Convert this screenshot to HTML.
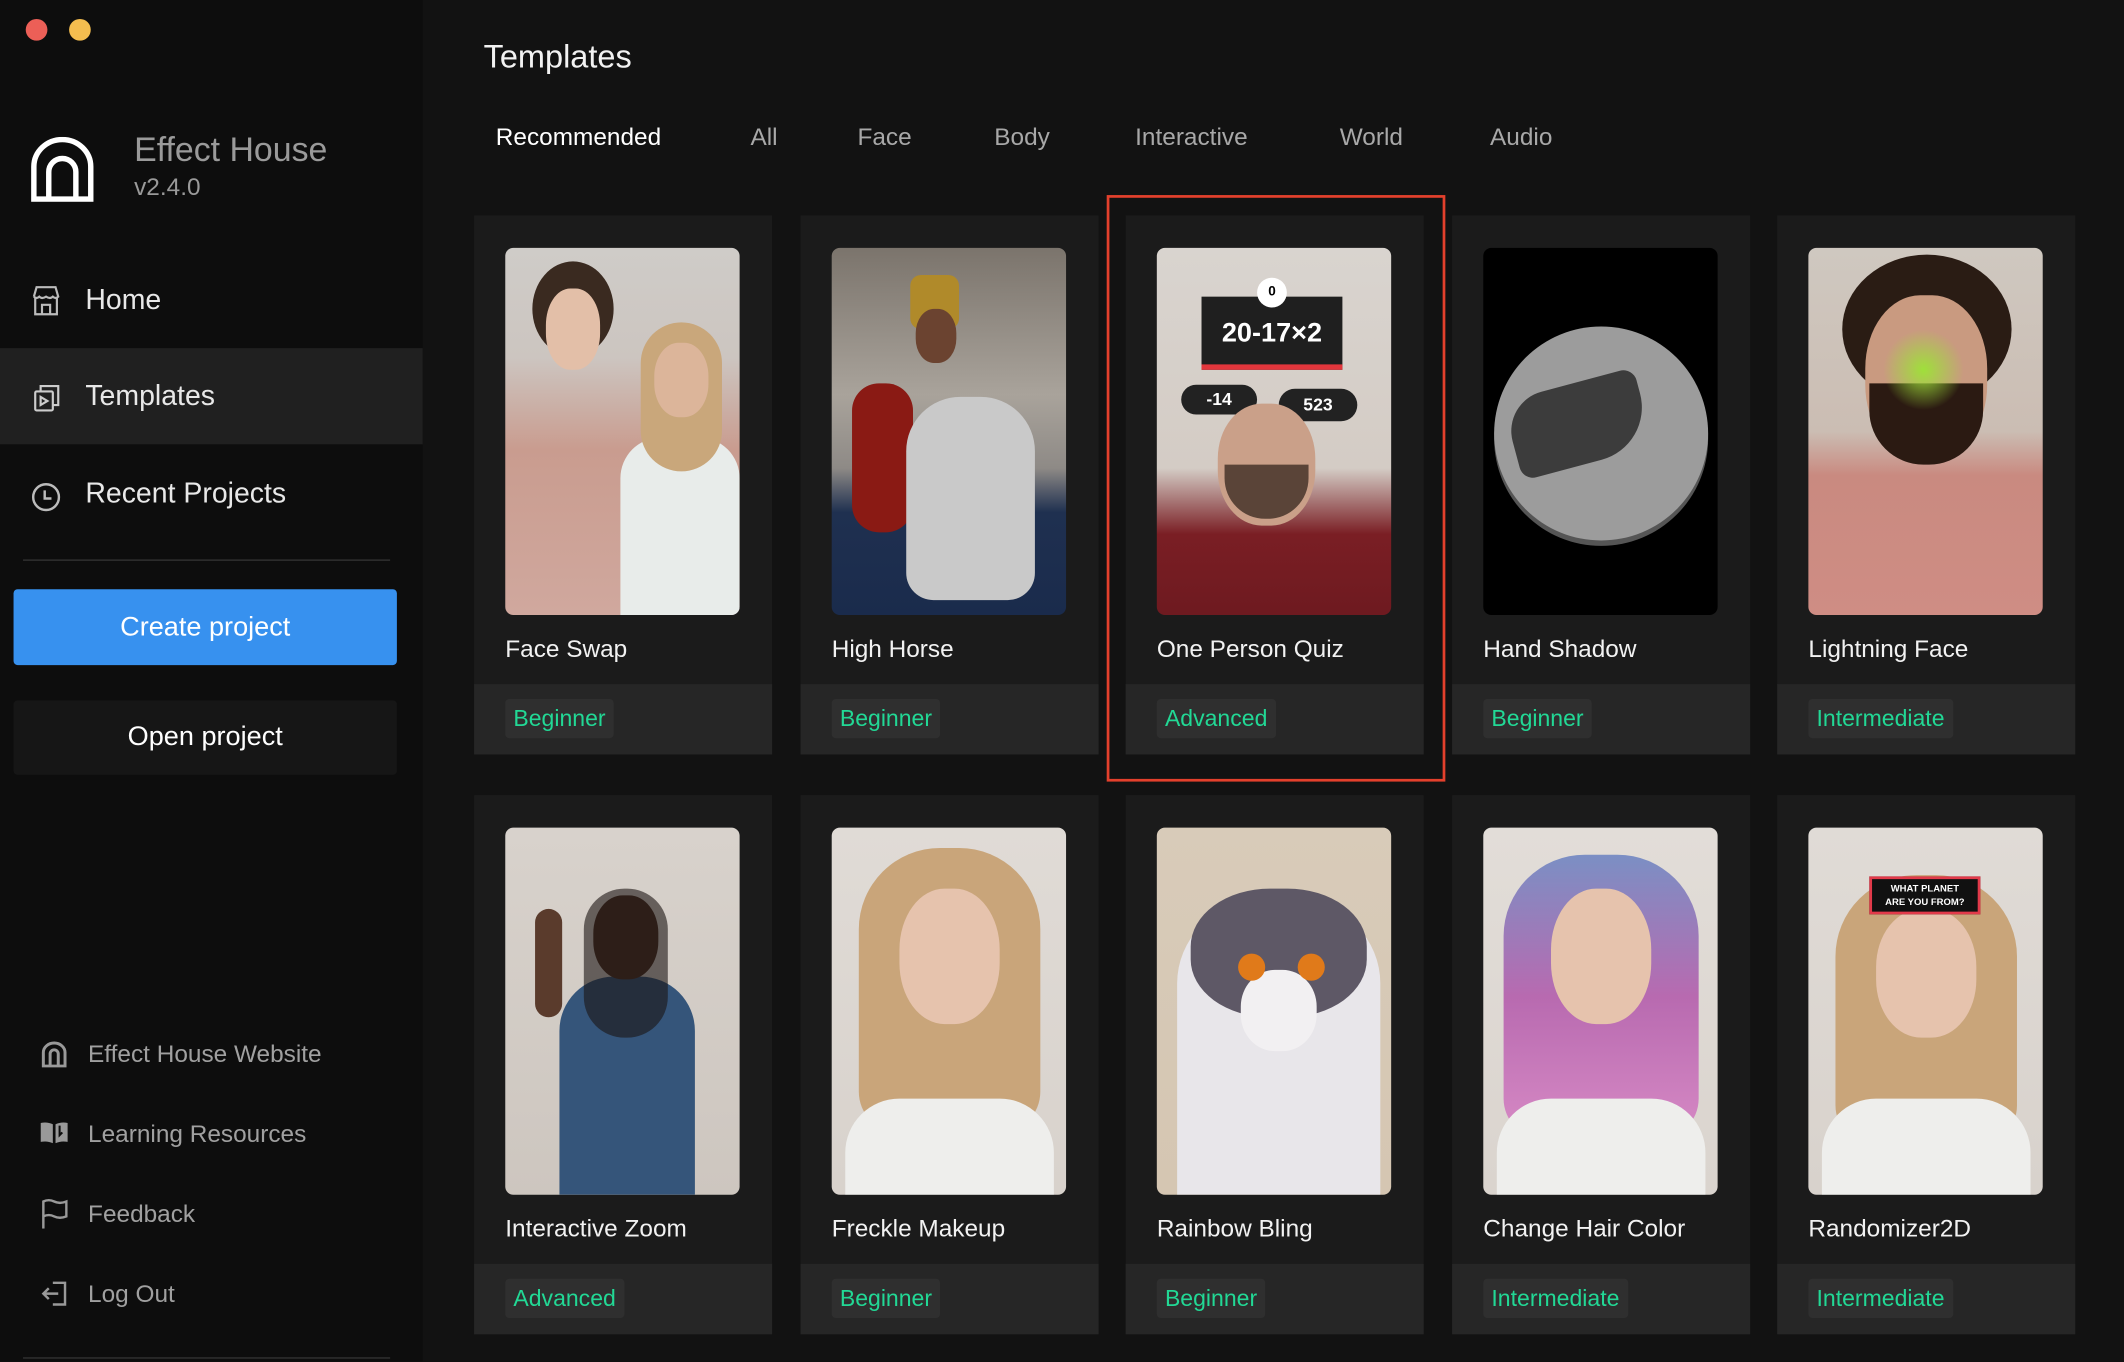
<!DOCTYPE html>
<html><head><meta charset="utf-8">
<style>
*{margin:0;padding:0;box-sizing:border-box}
html,body{width:2124px;height:1362px;overflow:hidden;background:#111;font-family:"Liberation Sans",sans-serif}
#w{position:absolute;left:0;top:0;width:1568px;height:1005px;transform:scale(1.35459);transform-origin:0 0;background:#121212}
.a{position:absolute}
#side{left:0;top:0;width:312px;height:1005px;background:#0d0d0d}
.dot{width:16px;height:16px;border-radius:50%;top:14px}
.nav{left:63px;font-size:21px;color:#e8e8e8}
.bl{left:65px;font-size:18px;color:#a0a0a0}
.tab{top:91px;font-size:18px;color:#a8a8a8}
.card{width:220px;height:398px;background:#1b1b1b}
.card .bot{position:absolute;left:0;bottom:0;width:220px;height:52px;background:#262626}
.card .img{position:absolute;left:23px;top:24px;width:173px;height:271px;border-radius:6px;overflow:hidden}
.card .t{position:absolute;left:23px;top:310px;font-size:18px;color:#f2f2f2}
.card .b{position:absolute;left:23px;top:357px;height:29px;padding:0 6px;line-height:30px;background:#2f2f2f;border-radius:3px;font-size:17px;color:#22d895}
</style></head><body><div id="w">
<div id="side" class="a"></div>
<div class="a dot" style="left:19px;background:#ec5f57"></div>
<div class="a dot" style="left:51px;background:#f4bd4f"></div>
<svg class="a" style="left:22px;top:101px" width="48" height="48" viewBox="0 0 48 48" fill="none" stroke="#fff" stroke-width="4"><path d="M3 46V22A21 20 0 0 1 45 22V46Z"/><path d="M14 46V26A10 10 0 0 1 34 26V46"/></svg>
<div class="a" style="left:99px;top:97px;font-size:25px;color:#9a9a9a">Effect House</div>
<div class="a" style="left:99px;top:128px;font-size:18px;color:#9a9a9a">v2.4.0</div>
<svg class="a" style="left:24px;top:211px" width="20" height="22" viewBox="0 0 20 22" fill="none" stroke="#bbb" stroke-width="1.6"><path d="M2 8V21H18V8M1 8L3 1H17L19 8Q17 10 15 8Q13 10 10 8Q7 10 5 8Q3 10 1 8M7 21V14H13V21"/></svg>
<div class="a nav" style="top:210px">Home</div>
<div class="a" style="left:0;top:257px;width:312px;height:71px;background:#202020"></div>
<svg class="a" style="left:24px;top:283px" width="22" height="22" viewBox="0 0 22 22" fill="none" stroke="#ccc" stroke-width="1.6"><rect x="2" y="6" width="13" height="14" rx="1"/><path d="M6 6V2H19V16H15"/><path d="M6 10L11 13L6 16Z"/></svg>
<div class="a nav" style="top:281px">Templates</div>
<svg class="a" style="left:23px;top:356px" width="22" height="22" viewBox="0 0 22 22" fill="none" stroke="#bbb" stroke-width="1.8"><circle cx="11" cy="11" r="9.5"/><path d="M10 6V12H15"/></svg>
<div class="a nav" style="top:353px">Recent Projects</div>
<div class="a" style="left:17px;top:413px;width:271px;height:1px;background:#333"></div>
<div class="a" style="left:10px;top:435px;width:283px;height:56px;background:#3791ef;border-radius:3px;color:#fff;font-size:20px;text-align:center;line-height:56px">Create project</div>
<div class="a" style="left:10px;top:517px;width:283px;height:55px;background:#161616;border-radius:3px;color:#fff;font-size:20px;text-align:center;line-height:55px">Open project</div>
<svg class="a" style="left:30px;top:768px" width="20" height="20" viewBox="0 0 20 20" fill="none" stroke="#999" stroke-width="2.2"><path d="M2 19V9A8 7 0 0 1 18 9V19Z"/><path d="M7 19V10A3 3 0 0 1 13 10V19"/></svg>
<div class="a bl" style="top:768px">Effect House Website</div>
<svg class="a" style="left:30px;top:828px" width="20" height="16" viewBox="0 0 20 16"><path d="M0 1Q5 0 9 2V16Q5 14 0 15Z" fill="#999"/><path d="M11 2Q15 0 20 1V15Q15 14 11 16Z" fill="#999"/><path d="M14 3V10L16 8" stroke="#0d0d0d" stroke-width="1.5" fill="none"/></svg>
<div class="a bl" style="top:827px">Learning Resources</div>
<svg class="a" style="left:30px;top:885px" width="20" height="22" viewBox="0 0 20 22" fill="none" stroke="#999" stroke-width="1.8"><path d="M2 22V2Q6 0 10 2Q14 4 19 2V13Q14 15 10 13Q6 11 2 13"/></svg>
<div class="a bl" style="top:886px">Feedback</div>
<svg class="a" style="left:30px;top:945px" width="20" height="20" viewBox="0 0 20 20" fill="none" stroke="#999" stroke-width="1.8"><path d="M9 2H18V18H9M13 10H2M6 6L2 10L6 14"/></svg>
<div class="a bl" style="top:945px">Log Out</div>
<div class="a" style="left:17px;top:1002px;width:271px;height:1px;background:#333"></div>

<div class="a" style="left:357px;top:29px;font-size:24px;color:#f2f2f2">Templates</div>
<div class="a tab" style="left:366px;color:#fff">Recommended</div>
<div class="a tab" style="left:554px">All</div>
<div class="a tab" style="left:633px">Face</div>
<div class="a tab" style="left:734px">Body</div>
<div class="a tab" style="left:838px">Interactive</div>
<div class="a tab" style="left:989px">World</div>
<div class="a tab" style="left:1100px">Audio</div>

<div class="a card" style="left:350px;top:159px"><div class="bot"></div><div class="img" style="background:linear-gradient(180deg,#cfccc8 0%,#ccc5c0 30%,#c99c8f 55%,#d0a89e 100%)"><div class="a" style="left:85px;top:140px;width:88px;height:131px;background:#e8ecea;border-radius:30px 30px 0 0"></div><div class="a" style="left:20px;top:10px;width:60px;height:70px;border-radius:50%;background:#3a2a20"></div><div class="a" style="left:30px;top:30px;width:40px;height:60px;border-radius:45%;background:#e3bfa8"></div><div class="a" style="left:100px;top:55px;width:60px;height:110px;border-radius:30px;background:#c9a77b"></div><div class="a" style="left:110px;top:70px;width:40px;height:55px;border-radius:45%;background:#dcb59a"></div></div><div class="t">Face Swap</div><div class="b">Beginner</div></div>
<div class="a card" style="left:591px;top:159px"><div class="bot"></div><div class="img" style="background:linear-gradient(180deg,#7b746c 0%,#a9a39b 40%,#8e8a86 60%,#1f3050 72%,#1a2b4c 100%)"><div class="a" style="left:15px;top:100px;width:45px;height:110px;background:#8a1a14;border-radius:20px"></div><div class="a" style="left:55px;top:110px;width:95px;height:150px;background:#c9c9c9;border-radius:40px 40px 20px 20px"></div><div class="a" style="left:58px;top:20px;width:36px;height:40px;background:#b08a2a;border-radius:8px"></div><div class="a" style="left:62px;top:45px;width:30px;height:40px;background:#6b4330;border-radius:45%"></div></div><div class="t">High Horse</div><div class="b">Beginner</div></div>
<div class="a card" style="left:831px;top:159px"><div class="bot"></div><div class="img" style="background:linear-gradient(180deg,#d9d4cf 0%,#d4ccc5 60%,#7a1e24 78%,#6e1a20 100%)"><div class="a" style="left:33px;top:36px;width:104px;height:54px;background:#1f1f1f;color:#fff;font-size:20px;font-weight:bold;text-align:center;line-height:54px;border-bottom:4px solid #e2363c">20-17×2</div><div class="a" style="left:74px;top:22px;width:22px;height:22px;border-radius:50%;background:#fff;color:#000;font-size:10px;font-weight:bold;text-align:center;line-height:22px">0</div><div class="a" style="left:18px;top:101px;width:56px;height:22px;border-radius:11px;background:#222;color:#fff;font-size:13px;font-weight:bold;text-align:center;line-height:22px">-14</div><div class="a" style="left:90px;top:104px;width:58px;height:24px;border-radius:12px;background:#222;color:#fff;font-size:13px;font-weight:bold;text-align:center;line-height:24px">523</div><div class="a" style="left:45px;top:115px;width:72px;height:90px;border-radius:45%;background:#caa089"></div><div class="a" style="left:50px;top:160px;width:62px;height:40px;border-radius:0 0 30px 30px;background:#5a4438"></div></div><div class="t">One Person Quiz</div><div class="b">Advanced</div></div>
<div class="a card" style="left:1072px;top:159px"><div class="bot"></div><div class="img" style="background:#000"><div class="a" style="left:8px;top:58px;width:158px;height:158px;border-radius:50%;background:#9c9c9c;box-shadow:0 4px 0 #555"></div><div class="a" style="left:20px;top:100px;width:100px;height:60px;background:#3c3c3c;border-radius:30px 10px 40px 10px;transform:rotate(-15deg)"></div></div><div class="t">Hand Shadow</div><div class="b">Beginner</div></div>
<div class="a card" style="left:1312px;top:159px"><div class="bot"></div><div class="img" style="background:linear-gradient(180deg,#cfc8c0 0%,#cbbdb3 50%,#c98a80 62%,#cf8d84 100%)"><div class="a" style="left:25px;top:5px;width:125px;height:110px;border-radius:50%;background:#2a1c14"></div><div class="a" style="left:42px;top:35px;width:90px;height:120px;border-radius:45%;background:#c99a80"></div><div class="a" style="left:45px;top:100px;width:84px;height:60px;border-radius:0 0 40px 40px;background:#2b1a12"></div><div class="a" style="left:55px;top:60px;width:60px;height:60px;border-radius:50%;background:radial-gradient(#9fe03a,transparent 70%)"></div></div><div class="t">Lightning Face</div><div class="b">Intermediate</div></div>

<div class="a card" style="left:350px;top:587px"><div class="bot"></div><div class="img" style="background:linear-gradient(180deg,#d8d2cc,#cdc6bf)"><div class="a" style="left:40px;top:110px;width:100px;height:161px;background:#35557a;border-radius:40px 40px 0 0"></div><div class="a" style="left:65px;top:50px;width:48px;height:62px;border-radius:45%;background:#4a2f22"></div><div class="a" style="left:58px;top:45px;width:62px;height:110px;border-radius:30px;background:#1a1412;opacity:.6"></div><div class="a" style="left:22px;top:60px;width:20px;height:80px;background:#5a3b2c;border-radius:10px"></div></div><div class="t">Interactive Zoom</div><div class="b">Advanced</div></div>
<div class="a card" style="left:591px;top:587px"><div class="bot"></div><div class="img" style="background:linear-gradient(180deg,#e0dbd6,#d8d2cc)"><div class="a" style="left:20px;top:15px;width:134px;height:210px;border-radius:60px 60px 30px 30px;background:#c9a57a"></div><div class="a" style="left:50px;top:45px;width:74px;height:100px;border-radius:45%;background:#e6c3ad"></div><div class="a" style="left:10px;top:200px;width:154px;height:71px;background:#eeeeec;border-radius:40px 40px 0 0"></div></div><div class="t">Freckle Makeup</div><div class="b">Beginner</div></div>
<div class="a card" style="left:831px;top:587px"><div class="bot"></div><div class="img" style="background:linear-gradient(180deg,#d8cbb9,#d5c6b2)"><div class="a" style="left:15px;top:55px;width:150px;height:216px;border-radius:60px 60px 0 0;background:#e8e6ea"></div><div class="a" style="left:25px;top:45px;width:130px;height:95px;border-radius:45%;background:#5e5866"></div><div class="a" style="left:62px;top:105px;width:56px;height:60px;border-radius:45%;background:#f2f0f2"></div><div class="a" style="left:60px;top:93px;width:20px;height:20px;border-radius:50%;background:#e07a1a"></div><div class="a" style="left:104px;top:93px;width:20px;height:20px;border-radius:50%;background:#e07a1a"></div></div><div class="t">Rainbow Bling</div><div class="b">Beginner</div></div>
<div class="a card" style="left:1072px;top:587px"><div class="bot"></div><div class="img" style="background:linear-gradient(180deg,#e2ddd8,#dad4ce)"><div class="a" style="left:15px;top:20px;width:144px;height:210px;border-radius:60px 60px 30px 30px;background:linear-gradient(180deg,#7b8fc4,#b86ab0 50%,#d78ac5)"></div><div class="a" style="left:50px;top:45px;width:74px;height:100px;border-radius:45%;background:#e6c3ad"></div><div class="a" style="left:10px;top:200px;width:154px;height:71px;background:#eeeeec;border-radius:40px 40px 0 0"></div></div><div class="t">Change Hair Color</div><div class="b">Intermediate</div></div>
<div class="a card" style="left:1312px;top:587px"><div class="bot"></div><div class="img" style="background:linear-gradient(180deg,#e0dbd6,#d8d2cc)"><div class="a" style="left:20px;top:35px;width:134px;height:200px;border-radius:60px 60px 30px 30px;background:#c9a57a"></div><div class="a" style="left:50px;top:60px;width:74px;height:95px;border-radius:45%;background:#e6c3ad"></div><div class="a" style="left:10px;top:200px;width:154px;height:71px;background:#eeeeec;border-radius:40px 40px 0 0"></div><div class="a" style="left:45px;top:36px;width:82px;height:28px;background:#111;border:2px solid #e23a4a;color:#fff;font-size:7px;font-weight:bold;text-align:center;line-height:10px;padding-top:3px">WHAT PLANET<br>ARE YOU FROM?</div></div><div class="t">Randomizer2D</div><div class="b">Intermediate</div></div>

<div class="a" style="left:817px;top:144px;width:250px;height:433px;border:2px solid #e3402c"></div>
</div></body></html>
